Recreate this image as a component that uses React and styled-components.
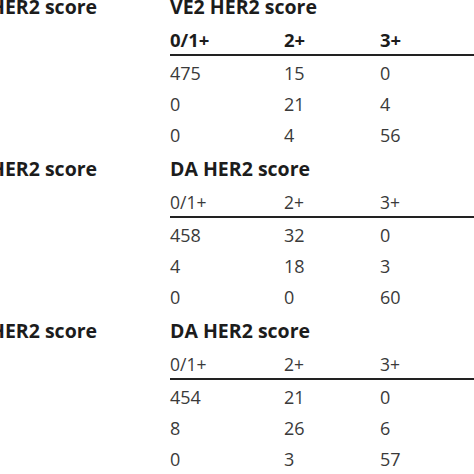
import React from "react";
import styled, { createGlobalStyle } from "styled-components";

const Global = createGlobalStyle`
  html, body { margin: 0; padding: 0; background: #fff; }
  body { font-family: "Open Sans", "DejaVu Sans", sans-serif; overflow: hidden; }
`;

const Page = styled.div`
  width: 474px;
  height: 474px;
  overflow: hidden;
  display: flex;
  flex-direction: column;
`;

const Section = styled.section`
  display: grid;
  grid-template-columns: 170px 1fr;
  height: 162px;
  flex: none;
`;

const Label = styled.div`
  font-size: 19.5px;
  font-weight: 700;
  color: #1c1c1c;
  line-height: 20px;
  margin-top: -3px;
  margin-left: -10px;
  white-space: nowrap;
`;

const Table = styled.div`
  display: flex;
  flex-direction: column;
`;

const Title = styled.div`
  font-size: 19.5px;
  font-weight: 700;
  color: #1c1c1c;
  line-height: 20px;
  margin-top: -3px;
  white-space: nowrap;
`;

const Body = styled.div`
  display: flex;
  flex-direction: column;
  padding-top: 2px;
`;

const Row = styled.div`
  display: grid;
  grid-template-columns: 114px 96px 1fr;
  font-size: ${(p) => (p.$head && p.$bold ? "18.5px" : p.$head ? "17.5px" : "18px")};
  color: ${(p) => (p.$head && p.$bold ? "#1c1c1c" : "#3a3a3a")};
  font-weight: ${(p) => (p.$head && p.$bold ? 700 : 400)};
  border-bottom: ${(p) => (p.$head ? "2px solid #222" : "none")};
  margin-top: ${(p) => (p.$head ? "8px" : "0")};
  padding-top: ${(p) => (p.$head ? "2px" : "0")};
  height: ${(p) => (p.$head ? "27px" : "31px")};
  line-height: ${(p) => (p.$head ? "26px" : "31px")};
`;

const Cell = styled.div`
  white-space: nowrap;
`;

const sections = [
  { label: "HER2 score", title: "VE2 HER2 score", bold: true, rows: [["475", "15", "0"], ["0", "21", "4"], ["0", "4", "56"]] },
  { label: "HER2 score", title: "DA HER2 score", bold: false, rows: [["458", "32", "0"], ["4", "18", "3"], ["0", "0", "60"]] },
  { label: "HER2 score", title: "DA HER2 score", bold: false, rows: [["454", "21", "0"], ["8", "26", "6"], ["0", "3", "57"]] },
];

export default function App() {
  return (
    <Page>
      <Global />
      {sections.map((s, i) => (
        <Section key={i}>
          <Label>{s.label}</Label>
          <Table>
            <Title>{s.title}</Title>
            <Row $head $bold={s.bold}>
              <Cell>0/1+</Cell>
              <Cell>2+</Cell>
              <Cell>3+</Cell>
            </Row>
            <Body>
              {s.rows.map((r, j) => (
                <Row key={j}>
                  {r.map((c, k) => (
                    <Cell key={k}>{c}</Cell>
                  ))}
                </Row>
              ))}
            </Body>
          </Table>
        </Section>
      ))}
    </Page>
  );
}
